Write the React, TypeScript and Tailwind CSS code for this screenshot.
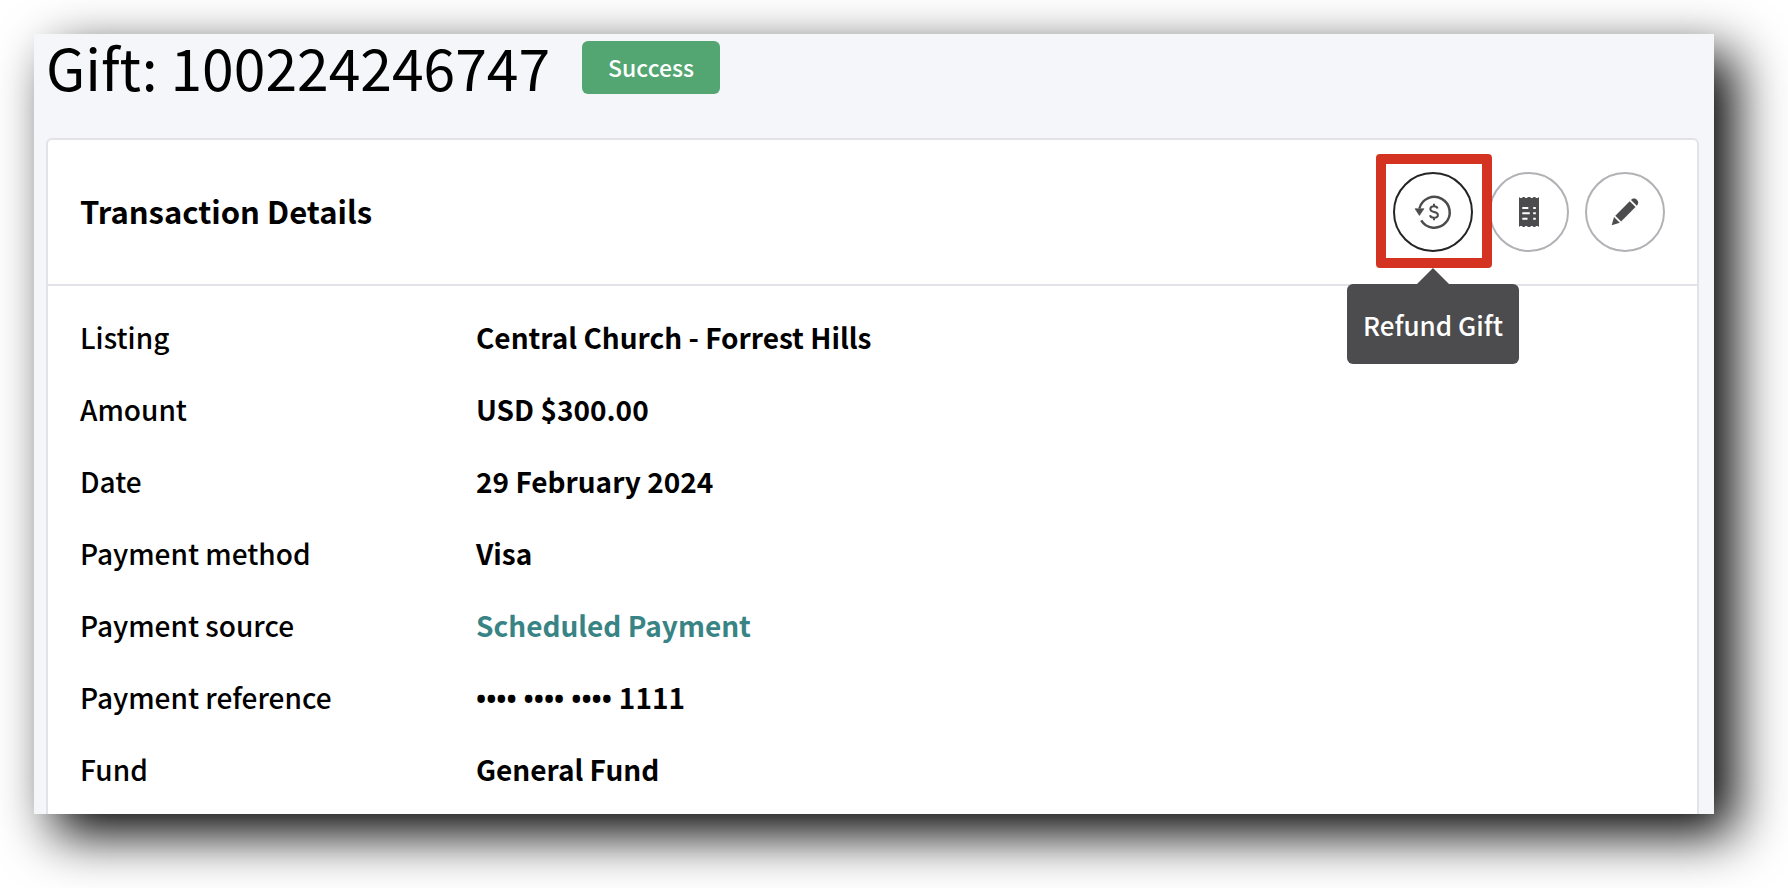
import type { ReactNode } from "react";

const details: { label: string; value: string; masked?: string; href?: string }[] = [
  { label: "Listing", value: "Central Church - Forrest Hills" },
  { label: "Amount", value: "USD $300.00" },
  { label: "Date", value: "29 February 2024" },
  { label: "Payment method", value: "Visa" },
  { label: "Payment source", value: "Scheduled Payment", href: "#scheduled" },
  { label: "Payment reference", masked: "•••• •••• •••• ", value: "1111" },
  { label: "Fund", value: "General Fund" },
];

function RefundIcon() {
  return (
    <svg viewBox="0 0 40 40" className="size-10" fill="none" stroke="currentColor" aria-hidden="true">
      <path d="M6.4 16.5A15.4 15.4 0 1 1 8.2 28.4" strokeWidth="2.5" />
      <path d="M2 16.7h9l-4.6 6.8z" fill="currentColor" strokeWidth="0.6" strokeLinejoin="round" />
      <path
        d="M24.6 16.6c-.4-1.6-1.8-2.3-3.6-2.3-2.2 0-3.7 1-3.7 2.8 0 1.7 1.4 2.4 3.7 2.9 2.5.5 3.9 1.2 3.9 2.9 0 1.8-1.6 2.8-3.9 2.8-2.1 0-3.6-.9-4-2.5M21 11.7v2.6M21 25.7v2.6"
        strokeWidth="2"
      />
    </svg>
  );
}

function ReceiptIcon() {
  return (
    <svg viewBox="0 0 40 40" className="size-10" aria-hidden="true">
      <path
        d="M10 5l1.2 1 1.6 0 1.2-1 1.4 0 1.1 1 1.4 0 1.1-1 2 0 1.1 1 1.4 0 1.1-1 1.4 0 1.2 1 1.6 0 1.2-1V35l-1.2-1-1.6 0-1.2 1-1.4 0-1.1-1-1.4 0-1.1 1-2 0-1.1-1-1.4 0-1.1 1-1.4 0-1.2-1-1.6 0-1.2 1z"
        fill="currentColor"
      />
      <path
        d="M13.3 16h6M13.3 21.3h7.5M13.3 26.7h5.2M24.2 16h2.6M24.2 21.3h2.6M24.2 26.7h2.6"
        stroke="white"
        strokeWidth="2"
      />
    </svg>
  );
}

function PencilIcon() {
  return (
    <svg viewBox="0 0 40 40" className="size-10" fill="currentColor" aria-hidden="true">
      <path d="M6.7 33.2L9 25l5.8 5.7z" />
      <path d="M10.3 23.7L24.7 9.3l5.8 5.8-14.4 14.4z" />
      <path d="M26 8c1.8-1.9 4.4-1.9 6 0 1.7 1.7 1.7 3.9-.2 5.8z" />
    </svg>
  );
}

function IconButton({ label, active, children }: { label: string; active?: boolean; children: ReactNode }) {
  return (
    <button
      type="button"
      aria-label={label}
      className={
        active
          ? "flex size-20 items-center justify-center rounded-full border-2 border-[#242426] bg-white text-[#4c4c4e]"
          : "flex size-20 items-center justify-center rounded-full border-2 border-[#b1b1b6] bg-white text-[#4c4c4e]"
      }
    >
      {children}
    </button>
  );
}

export default function App() {
  return (
    <div className="bg-white pt-[34px] pr-[74px] pb-[74px] pl-[34px] font-['Noto_Sans_CJK_SC',sans-serif] text-[28px] text-black">
      <main className="bg-[#f4f6fa] pr-[15px] pl-3 shadow-[20px_20px_50px_#000]">
        <header className="flex h-[104px] items-start gap-8">
          <h1 className="text-[57px] leading-16">Gift: 100224246747</h1>
          <span className="mt-[7px] flex h-[53px] items-center rounded-md bg-[#53a672] px-[26px] text-[23px] font-medium text-white">
            Success
          </span>
        </header>

        <section className="rounded-t-md border-2 border-b-0 border-[#e2e2e8] bg-white pb-[9px]">
          <div className="flex h-[146px] items-center justify-between border-b-2 border-[#e2e2e8] px-8">
            <h2 className="pb-0.5 text-[31px] font-bold">Transaction Details</h2>
            <div className="flex gap-4">
              <div className="relative">
                <IconButton label="Refund Gift" active>
                  <RefundIcon />
                </IconButton>
                <div className="pointer-events-none absolute -top-[18px] -right-[19px] -bottom-4 -left-[17px] z-10 rounded-sm border-10 border-[#d33320]" />
                <div
                  role="tooltip"
                  className="absolute top-24 left-1/2 z-20 flex -translate-x-1/2 flex-col items-center"
                >
                  <svg viewBox="0 0 32 16" className="h-4 w-8" aria-hidden="true">
                    <path d="M0 16L16 0l16 16z" fill="#4c4c4e" />
                  </svg>
                  <span className="flex h-20 items-center rounded-md bg-[#4c4c4e] px-4 text-[26px] font-medium whitespace-nowrap text-white">
                    Refund Gift
                  </span>
                </div>
              </div>
              <IconButton label="View receipt">
                <ReceiptIcon />
              </IconButton>
              <IconButton label="Edit gift">
                <PencilIcon />
              </IconButton>
            </div>
          </div>

          <dl className="px-8 pt-[15px]">
            {details.map((row) => (
              <div key={row.label} className="flex h-[72px] items-center">
                <dt className="w-[396px] font-medium">{row.label}</dt>
                <dd className="font-bold">
                  {row.masked && (
                    <span className="font-['Open_Sans',sans-serif] text-[27px] leading-none whitespace-pre">
                      {row.masked}
                    </span>
                  )}
                  {row.href ? (
                    <a href={row.href} className="text-[#388485]">
                      {row.value}
                    </a>
                  ) : (
                    row.value
                  )}
                </dd>
              </div>
            ))}
          </dl>
        </section>
      </main>
    </div>
  );
}
